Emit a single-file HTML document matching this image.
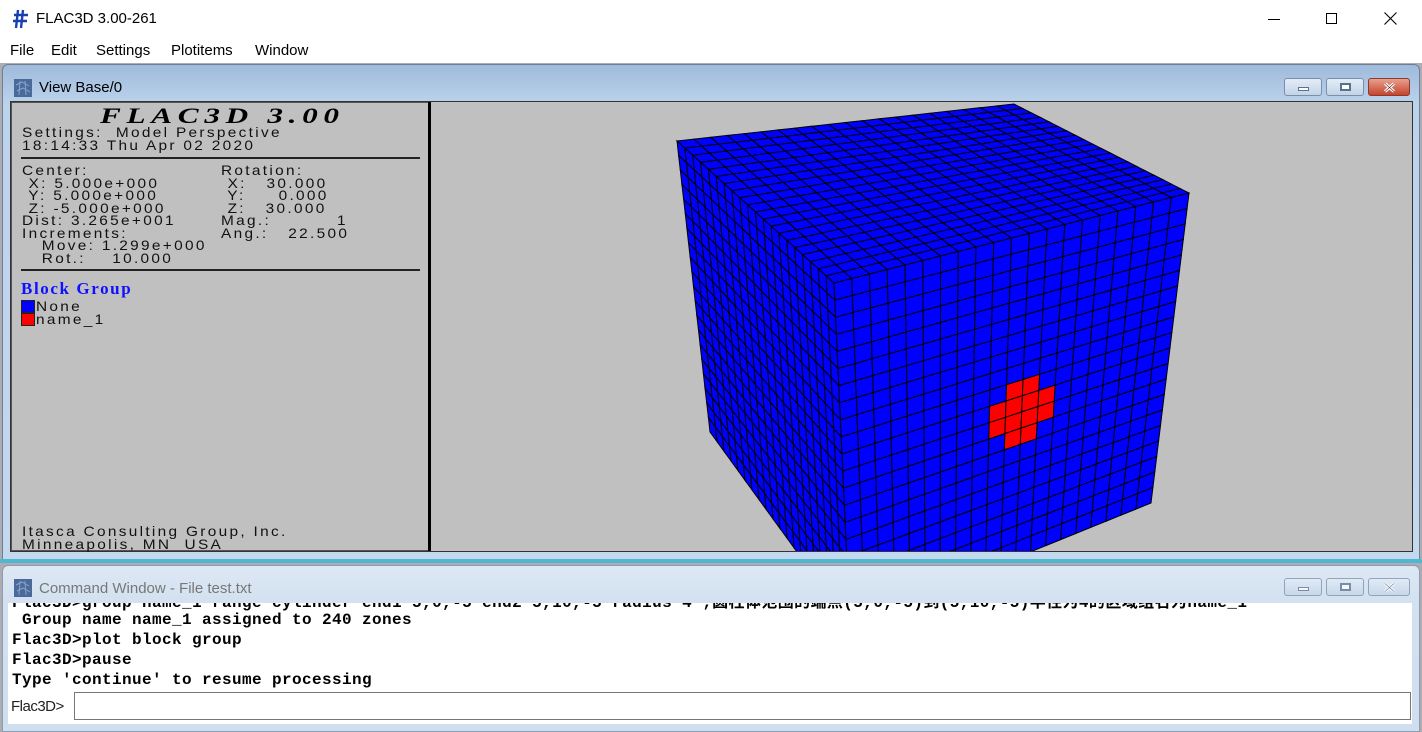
<!DOCTYPE html>
<html><head><meta charset="utf-8">
<style>
*{margin:0;padding:0;box-sizing:border-box}
body{width:1422px;height:732px;overflow:hidden;background:#fff;font-family:"Liberation Sans","Noto Sans CJK SC",sans-serif;position:relative}
.abs{position:absolute}
.tb{font-size:15px;color:#000}
.menu span{position:absolute;top:42px;font-size:15px}
.frame{position:absolute;border:1px solid #6d7f96;border-radius:6px 6px 0 0}
.btn{position:absolute;width:38px;height:18px;border:1px solid #7b8ea8;border-radius:3px;background:linear-gradient(#e4edf7,#c3d4e8)}
.lp{position:absolute;font-size:14px;letter-spacing:2.1px;color:#111;white-space:pre;line-height:12.5px;transform:scaleX(1.1);transform-origin:left}
.cmd{position:absolute;left:12px;font-family:"Liberation Mono","Noto Sans CJK SC",monospace;font-weight:bold;font-size:16px;letter-spacing:0.4px;white-space:pre;color:#000}
</style></head><body>
<svg class="abs" style="left:12px;top:9px" width="18" height="20" viewBox="0 0 18 20"><path d="M6 1 L4 19 M11 1 L9 19 M2 6 H16 M1 12 H15" stroke="#1a3fb0" stroke-width="2.4" fill="none"/></svg>
<div class="abs tb" style="left:36px;top:10px">FLAC3D 3.00-261</div>
<div class="abs" style="left:1268px;top:19px;width:12px;height:1px;background:#000"></div>
<div class="abs" style="left:1326px;top:13px;width:11px;height:11px;border:1px solid #000"></div>
<svg class="abs" style="left:1384px;top:12px" width="13" height="13"><path d="M0.5 0.5L12.5 12.5M12.5 0.5L0.5 12.5" stroke="#000" stroke-width="1.1"/></svg>
<div class="menu"><span style="left:10px">File</span><span style="left:51px">Edit</span><span style="left:96px">Settings</span><span style="left:171px">Plotitems</span><span style="left:255px">Window</span></div>
<div class="abs" style="left:0;top:63px;width:1422px;height:669px;background:#abadb3"></div>
<div class="frame" style="left:2px;top:64px;width:1418px;height:496px;background:linear-gradient(#9fbadb,#bcd3ec 40px,#c4d8ee);"></div>
<svg class="abs" style="left:14px;top:79px" width="18" height="18"><rect width="18" height="18" fill="#4a6a9c"/><path d="M2 6L8 3L15 7M3 12L9 9L16 13M6 2L5 16M11 2L12 16" stroke="#8aa3c8" fill="none"/></svg>
<div class="abs tb" style="left:39px;top:79px">View Base/0</div>
<div class="btn" style="left:1284px;top:78px"><div class="abs" style="left:13px;top:8px;width:11px;height:4px;background:#fff;border:1px solid #59708f"></div></div>
<div class="btn" style="left:1326px;top:78px"><div class="abs" style="left:13px;top:4px;width:11px;height:8px;border:2px solid #59708f;background:#fff"></div></div>
<div class="btn" style="left:1368px;top:78px;width:42px;background:linear-gradient(#e8a08e,#c7432b);border-color:#8a3a2c"><svg class="abs" style="left:14px;top:3px" width="13" height="11"><path d="M2 1.5L11 9.5M11 1.5L2 9.5" stroke="#fff" stroke-width="3"/><path d="M2 1.5L11 9.5M11 1.5L2 9.5" stroke="#5a2020" stroke-width="0.6"/></svg></div>
<div class="abs" style="left:10px;top:101px;width:1403px;height:451px;background:#c0c0c0;border:1px solid #333"></div>
<div class="abs" style="left:11px;top:102px;width:418px;height:449px;border:1px solid #555"></div>
<div class="abs" style="left:428px;top:102px;width:3px;height:449px;background:#000"></div>
<div class="abs" style="left:100px;top:103px;font-family:'Liberation Serif',serif;font-style:italic;font-weight:bold;font-size:22px;letter-spacing:4px;transform:scaleX(1.42);transform-origin:left;color:#000">FLAC3D 3.00</div>
<div class="lp" style="left:22px;top:126px">Settings:  Model Perspective</div>
<div class="lp" style="left:22px;top:139px">18:14:33 Thu Apr 02 2020</div>
<div class="abs" style="left:21px;top:157px;width:399px;height:2px;background:#222"></div>
<div class="lp" style="left:22px;top:164px">Center:
 X: 5.000e+000
 Y: 5.000e+000
 Z: -5.000e+000
Dist: 3.265e+001
Increments:
   Move: 1.299e+000
   Rot.:    10.000</div>
<div class="lp" style="left:221px;top:164px">Rotation:
 X:   30.000
 Y:     0.000
 Z:   30.000
Mag.:          1
Ang.:   22.500</div>
<div class="abs" style="left:21px;top:269px;width:399px;height:2px;background:#222"></div>
<div class="abs" style="left:21px;top:279px;font-family:'Liberation Serif',serif;font-weight:bold;font-size:17px;letter-spacing:1.6px;color:#1010ff">Block Group</div>
<div class="abs" style="left:21px;top:300px;width:14px;height:13px;background:#0000ff;border:1px solid #222"></div>
<div class="abs" style="left:21px;top:313px;width:14px;height:13px;background:#ff0000;border:1px solid #222"></div>
<div class="lp" style="left:36px;top:300px">None</div>
<div class="lp" style="left:36px;top:313px">name_1</div>
<div class="lp" style="left:22px;top:525px">Itasca Consulting Group, Inc.</div>
<div class="lp" style="left:22px;top:538px">Minneapolis, MN  USA</div>
<svg id="cube" class="abs" style="left:431px;top:102px" width="981" height="449" viewBox="431 102 981 449"></svg>
<div class="abs" style="left:0;top:559px;width:1422px;height:4px;background:#4fb7cf"></div>
<div class="frame" style="left:2px;top:565px;width:1418px;height:167px;background:linear-gradient(#dde8f4,#d3e1f0 35px,#cfdff0);border-color:#8e9bb0"></div>
<svg class="abs" style="left:14px;top:579px" width="18" height="18"><rect width="18" height="18" fill="#4a6a9c"/><path d="M2 6L8 3L15 7M3 12L9 9L16 13M6 2L5 16M11 2L12 16" stroke="#8aa3c8" fill="none"/></svg>
<div class="abs tb" style="left:39px;top:580px;color:#777">Command Window - File test.txt</div>
<div class="btn" style="left:1284px;top:578px;opacity:.75"><div class="abs" style="left:13px;top:8px;width:11px;height:4px;background:#fff;border:1px solid #59708f"></div></div>
<div class="btn" style="left:1326px;top:578px;opacity:.75"><div class="abs" style="left:13px;top:4px;width:11px;height:8px;border:2px solid #59708f;background:#fff"></div></div>
<div class="btn" style="left:1368px;top:578px;width:42px;opacity:.75"><svg class="abs" style="left:14px;top:3px" width="13" height="11"><path d="M2 1.5L11 9.5M11 1.5L2 9.5" stroke="#fff" stroke-width="3"/><path d="M2 1.5L11 9.5M11 1.5L2 9.5" stroke="#59708f" stroke-width="0.8"/></svg></div>
<div class="abs" style="left:8px;top:603px;width:1404px;height:121px;background:#fff;overflow:hidden">
 <div class="cmd" style="left:4px;top:-15px">Flac3D>group name_1 range cylinder end1 5,0,-5 end2 5,10,-5 radius 4 ;圆柱体范围的端点(5,0,-5)到(5,10,-5)半径为4的区域组名为name_1</div>
 <div class="cmd" style="left:4px;top:8px"> Group name name_1 assigned to 240 zones</div>
 <div class="cmd" style="left:4px;top:28px">Flac3D>plot block group</div>
 <div class="cmd" style="left:4px;top:48px">Flac3D>pause</div>
 <div class="cmd" style="left:4px;top:68px">Type 'continue' to resume processing</div>
 <div class="abs" style="left:3px;top:95px;font-size:15px;letter-spacing:-0.5px;color:#222">Flac3D&gt;</div>
 <div class="abs" style="left:66px;top:89px;width:1337px;height:28px;border:1px solid #777;background:#fff"></div>
</div>
<script>
(function(){
var s=document.getElementById('cube'),N=20,h='';
function bl(P,u,v){var a=P[0],b=P[1],c=P[2],d=P[3];
 return [(1-u)*(1-v)*a[0]+u*(1-v)*b[0]+u*v*c[0]+(1-u)*v*d[0],(1-u)*(1-v)*a[1]+u*(1-v)*b[1]+u*v*c[1]+(1-u)*v*d[1]];}
function face(P,red){for(var i=0;i<N;i++)for(var j=0;j<N;j++){
 var p=[bl(P,i/N,j/N),bl(P,(i+1)/N,j/N),bl(P,(i+1)/N,(j+1)/N),bl(P,i/N,(j+1)/N)];
 var r=red&&red(i,j);
 h+='<polygon points="'+p.map(function(q){return q[0].toFixed(1)+','+q[1].toFixed(1)}).join(' ')+'" fill="'+(r?'#ff0000':'#0000ff')+'" stroke="#000" stroke-width="1"/>';}}
var A=[677,141],B=[1014,104],C=[1189,193],D=[834,283],E=[710,432],F=[850,625],G=[1151,503];
face([A,B,C,D]);
face([A,D,F,E]);
face([D,C,G,F],function(i,j){if(i<9||i>12||j<9||j>12)return false;var ci=(i==9||i==12),cj=(j==9||j==12);return !(ci&&cj);});
s.innerHTML=h;})();
</script>
</body></html>
